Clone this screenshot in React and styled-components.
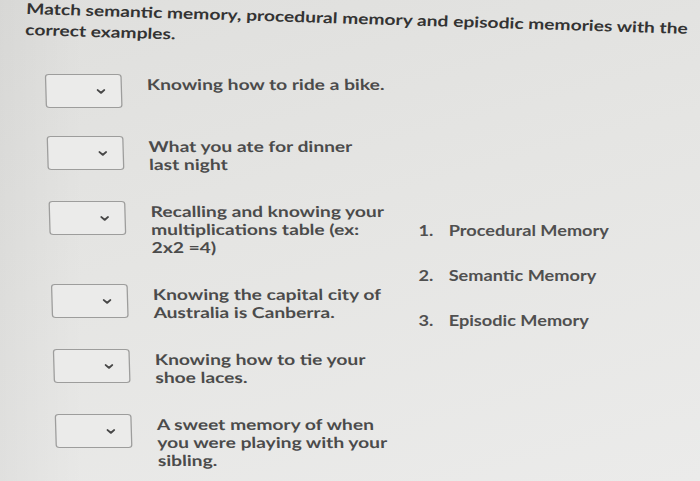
import React from "react";
import styled, { createGlobalStyle } from "styled-components";

const Global = createGlobalStyle`
  html, body { margin: 0; padding: 0; }
  body {
    width: 700px;
    height: 481px;
    overflow: hidden;
    background:
      linear-gradient(90deg, rgba(0, 0, 0, 0.035) 0%, rgba(0, 0, 0, 0) 12%),
      linear-gradient(165deg, #dfdfdd 0%, #e5e5e3 45%, #ebebea 100%);
    font-family: Lato, "Noto Sans", sans-serif;
  }
`;

/* The sheet is drawn at its natural metrics and widened as a whole. */
const Page = styled.div`
  width: 547px;
  padding: 0 0 0 21px;
  box-sizing: border-box;
  transform: scaleX(1.28);
  transform-origin: 0 0;
`;

const Prompt = styled.p`
  margin: -2px 0 0;
  width: 525px;
  font-size: 15px;
  line-height: 21px;
  font-weight: 700;
  color: #333333;
  transform: rotate(2.2deg);
  transform-origin: 0 0;
`;

const Matcher = styled.div`
  display: flex;
  align-items: center;
  margin-top: 34px;
  gap: 27.5px;
`;

const Items = styled.div`
  display: flex;
  flex-direction: column;
  gap: 28px;
  padding-left: 14px;
  transform: skewX(1.3deg);
  transform-origin: 0 0;
`;

const Item = styled.div`
  display: flex;
  align-items: flex-start;
  gap: 19.5px;
`;

const Select = styled.div`
  flex: none;
  width: 60px;
  height: 34px;
  box-sizing: border-box;
  border: 1px solid #9d9d9c;
  border-radius: 3px;
  background: #ebebea;
  display: flex;
  align-items: center;
  justify-content: flex-end;
  padding-right: 12px;
`;

const Chevron = () => (
  <svg width="7" height="5" viewBox="0 0 7 5" fill="none">
    <path d="M0.9 1 L3.5 3.8 L6.1 1" stroke="#474747" strokeWidth="1.7" strokeLinecap="round" strokeLinejoin="round" />
  </svg>
);

const Example = styled.div`
  width: 185px;
  padding-top: 1px;
  font-size: 15px;
  line-height: 18px;
  font-weight: 700;
  color: #4b4b4b;
  white-space: nowrap;
`;

const Line = styled.span`
  display: block;
`;

const Options = styled.ol`
  list-style: none;
  margin: 0;
  padding: 8px 0 0;
  display: flex;
  flex-direction: column;
  gap: 27px;
`;

const Option = styled.li`
  display: flex;
  font-size: 14.2px;
  line-height: 18px;
  font-weight: 700;
  color: #505050;
`;

const Num = styled.span`
  width: 23.5px;
  flex: none;
`;

const examples = [
  ["Knowing how to ride a bike."],
  ["What you ate for dinner", "last night"],
  ["Recalling and knowing your", "multiplications table (ex:", "2x2 =4)"],
  ["Knowing the capital city of", "Australia is Canberra."],
  ["Knowing how to tie your", "shoe laces."],
  ["A sweet memory of when", "you were playing with your", "sibling."],
];

const options = ["Procedural Memory", "Semantic Memory", "Episodic Memory"];

export default function App() {
  return (
    <>
      <Global />
      <Page>
        <Prompt>
          Match semantic memory, procedural memory and episodic memories with the correct examples.
        </Prompt>
        <Matcher>
          <Items>
            {examples.map((lines, i) => (
              <Item key={i}>
                <Select>
                  <Chevron />
                </Select>
                <Example>
                  {lines.map((l) => (
                    <Line key={l}>{l}</Line>
                  ))}
                </Example>
              </Item>
            ))}
          </Items>
          <Options>
            {options.map((o, i) => (
              <Option key={o}>
                <Num>{i + 1}.</Num>
                {o}
              </Option>
            ))}
          </Options>
        </Matcher>
      </Page>
    </>
  );
}
